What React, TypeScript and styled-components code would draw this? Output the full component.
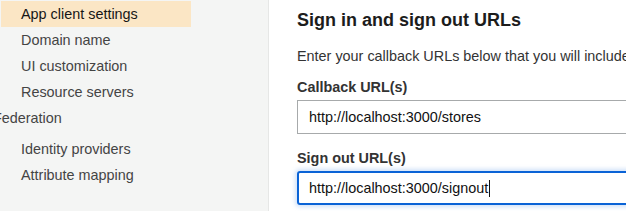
import styled, { createGlobalStyle } from 'styled-components'

const GlobalStyle = createGlobalStyle`
  html, body {
    margin: 0;
    padding: 0;
    background: #ffffff;
    overflow: hidden;
  }
  body {
    font-family: "Liberation Sans", Arial, Helvetica, sans-serif;
  }
`

const Page = styled.div`
  display: flex;
  width: 626px;
  height: 211px;
  overflow: hidden;
`

const Sidebar = styled.nav`
  width: 269px;
  flex-shrink: 0;
  background: #f4f5f4;
  border-right: 1px solid #e6e7e6;
  padding-top: 1px;
  box-sizing: border-box;
  overflow: hidden;
`

const NavItem = styled.div<{ $active?: boolean }>`
  width: 190px;
  height: 26px;
  margin-left: 1px;
  padding-left: 20px;
  box-sizing: border-box;
  display: flex;
  align-items: center;
  font-size: 14.4px;
  color: ${p => (p.$active ? '#161616' : '#444444')};
  background: ${p => (p.$active ? '#fbe6c5' : 'transparent')};
`

const GroupTitle = styled.div`
  height: 26px;
  margin-left: -7px;
  margin-bottom: 5px;
  display: flex;
  align-items: center;
  font-size: 14.4px;
  color: #444444;
`

const Main = styled.main`
  flex: 1;
  padding: 0 0 0 28px;
  white-space: nowrap;
  overflow: hidden;
  color: #161616;
`

const Heading = styled.h2`
  margin: 9px 0 0;
  font-size: 18px;
  line-height: 22px;
  font-weight: bold;
  color: #1c1c1c;
`

const Description = styled.p`
  margin: 16px 0 0;
  font-size: 14.4px;
  line-height: 18px;
  color: #333333;
`

const FieldGroup = styled.div<{ $top: number }>`
  margin-top: ${p => p.$top}px;
`

const Label = styled.div`
  margin-bottom: 4px;
  font-size: 14.4px;
  line-height: 18px;
  font-weight: bold;
  color: #333333;
`

const Field = styled.div<{ $focused?: boolean }>`
  width: 340px;
  height: 34px;
  box-sizing: border-box;
  display: flex;
  align-items: center;
  padding-left: ${p => (p.$focused ? '10px' : '11px')};
  font-size: 14.4px;
  color: #111111;
  border: ${p => (p.$focused ? '2px solid #0a63d6' : '1px solid #a7aaab')};
  border-radius: ${p => (p.$focused ? '3px' : '0')};
  box-shadow: ${p => (p.$focused ? '0 0 4px 2px rgba(120, 170, 235, 0.35)' : 'none')};
`

const Caret = styled.span`
  display: inline-block;
  width: 1px;
  height: 17px;
  background: #111111;
  margin-left: 1px;
`

export default function App() {
  return (
    <>
      <GlobalStyle />
      <Page>
        <Sidebar>
          <NavItem $active>App client settings</NavItem>
          <NavItem>Domain name</NavItem>
          <NavItem>UI customization</NavItem>
          <NavItem>Resource servers</NavItem>
          <GroupTitle>Federation</GroupTitle>
          <NavItem>Identity providers</NavItem>
          <NavItem>Attribute mapping</NavItem>
        </Sidebar>
        <Main>
          <Heading>Sign in and sign out URLs</Heading>
          <Description>Enter your callback URLs below that you will include in your sign in and sign out requests.</Description>
          <FieldGroup $top={13}>
            <Label>Callback URL(s)</Label>
            <Field>http://localhost:3000/stores</Field>
          </FieldGroup>
          <FieldGroup $top={15}>
            <Label>Sign out URL(s)</Label>
            <Field $focused>
              http://localhost:3000/signout<Caret />
            </Field>
          </FieldGroup>
        </Main>
      </Page>
    </>
  )
}
